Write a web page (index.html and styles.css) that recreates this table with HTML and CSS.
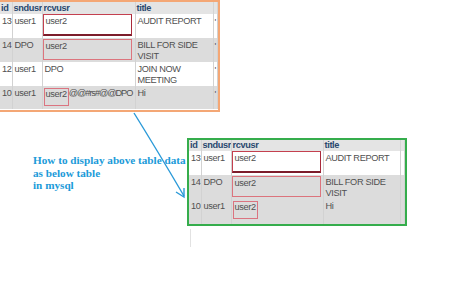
FILE: index.html
```html
<!DOCTYPE html>
<html>
<head>
<meta charset="utf-8">
<link rel="stylesheet" href="styles.css">
</head>
<body>
<div class="canvas">
  <div class="shot shot-top">
    <table class="grid">
      <colgroup><col class="c-id"><col class="c-snd"><col class="c-rcv"><col class="c-title"><col class="c-x"></colgroup>
      <thead><tr><th>id</th><th>sndusr</th><th>rcvusr</th><th>title</th><th></th></tr></thead>
      <tbody>
        <tr><td>13</td><td>user1</td><td class="bx"><div class="hl strong">user2</div></td><td>AUDIT REPORT</td><td class="x">'</td></tr>
        <tr class="alt"><td>14</td><td>DPO</td><td class="bx"><div class="hl soft">user2</div></td><td>BILL FOR SIDE VISIT</td><td class="x">'</td></tr>
        <tr><td>12</td><td>user1</td><td>DPO</td><td>JOIN NOW MEETING</td><td class="x">'</td></tr>
        <tr class="alt last"><td>10</td><td>user1</td><td class="nw"><span class="mark">user2</span><span class="tight">@@#rs#@@DPO</span></td><td>Hi</td><td class="x">'</td></tr>
      </tbody>
    </table>
  </div>

  <p class="note">How to display above table data<br>as below table<br>in mysql</p>

  <div class="shot shot-bottom">
    <table class="grid">
      <colgroup><col class="b-id"><col class="c-snd"><col class="b-rcv"><col class="b-title"><col class="b-x"></colgroup>
      <thead><tr><th>id</th><th>sndusr</th><th>rcvusr</th><th>title</th><th></th></tr></thead>
      <tbody>
        <tr><td>13</td><td>user1</td><td class="bx"><div class="hl strong">user2</div></td><td>AUDIT REPORT</td><td></td></tr>
        <tr class="alt"><td>14</td><td>DPO</td><td class="bx"><div class="hl soft">user2</div></td><td>BILL FOR SIDE VISIT</td><td></td></tr>
        <tr class="alt tall"><td>10</td><td>user1</td><td class="nw"><span class="mark">user2</span></td><td>Hi</td><td></td></tr>
      </tbody>
    </table>
  </div>
  <div class="tail"></div>

  <svg class="arrow" width="474" height="282" viewBox="0 0 474 282">
    <path d="M134 113 Q 157 150 184 196" fill="none" stroke="#2b9ad8" stroke-width="1.4"/>
    <path d="M176 192 L184 197 L184 188" fill="none" stroke="#2b9ad8" stroke-width="1.4"/>
  </svg>
</div>
</body>
</html>
```
FILE: styles.css
```css
body {
  margin: 0;
  background: #ffffff;
}

.canvas {
  position: relative;
  width: 474px;
  height: 282px;
  overflow: hidden;
  font-family: "Liberation Sans", Arial, sans-serif;
}

.shot {
  position: absolute;
  background: #ffffff;
}

.shot-top {
  left: 0;
  top: 0;
  border: 2px solid #f4a775;
  border-left: none;
  padding-bottom: 1px;
}

.shot-bottom {
  left: 187px;
  top: 138px;
  border: 2px solid #35ad4c;
}

.grid {
  border-collapse: collapse;
  table-layout: fixed;
  font-size: 9.2px;
  letter-spacing: -0.35px;
  color: #505050;
}

.shot-top .grid { width: 217px; }
.shot-bottom .grid { width: 215px; }

.c-id { width: 12px; }
.c-snd { width: 30px; }
.c-rcv { width: 93px; }
.c-title { width: 78px; }
.c-x { width: 4px; }

.b-id { width: 12px; }
.b-rcv { width: 92px; }
.b-title { width: 77px; }
.b-x { width: 4px; }

.grid th {
  background: #e4e4e4;
  color: #29486f;
  font-weight: bold;
  text-align: left;
  height: 12px;
  line-height: 12px;
  padding: 0 0 0 1px;
  border-right: 1px solid #d4d4d4;
  white-space: nowrap;
  overflow: hidden;
}

.shot-bottom .grid th {
  height: 11px;
  line-height: 11px;
}

.grid td {
  vertical-align: top;
  padding: 2px 0 0 2px;
  line-height: 11px;
  border-right: 1px solid #d2d2d2;
  white-space: normal;
  overflow: hidden;
}

.grid td.nw { white-space: nowrap; }

.tight { letter-spacing: -1.05px; }

.grid tbody tr { height: 24px; }
.grid tbody tr.last { height: 23px; }
.grid tbody tr.tall { height: 25px; }

.grid tr.alt td { background: #dcdcdc; }

.grid td.x {
  color: #555;
  padding-left: 1px;
  padding-top: 3px;
}

.grid td.bx { padding: 0; }

.hl {
  box-sizing: border-box;
  width: 89px;
  padding: 1px 0 0 2px;
}

.hl.strong {
  height: 22px;
  border: 1px solid #c4404f;
  border-bottom: 2px solid #7c1d2b;
  border-right: 1px solid #a92a3b;
}

.hl.soft {
  height: 21px;
  margin-top: 1px;
  border: 1px solid #dc747d;
}

.mark {
  display: inline-block;
  vertical-align: top;
  box-sizing: border-box;
  height: 18px;
  margin-left: -1px;
  padding: 0 1px 0 1px;
  border: 1px solid #db7480;
}

.note {
  position: absolute;
  left: 33px;
  top: 154px;
  margin: 0;
  font: bold 11.2px/12.5px "Liberation Serif", "Times New Roman", serif;
  color: #1c9bd9;
}

.tail {
  position: absolute;
  left: 190px;
  top: 229px;
  width: 1px;
  height: 18px;
  background: #e2e2e2;
}

.arrow {
  position: absolute;
  left: 0;
  top: 0;
  pointer-events: none;
}
```
